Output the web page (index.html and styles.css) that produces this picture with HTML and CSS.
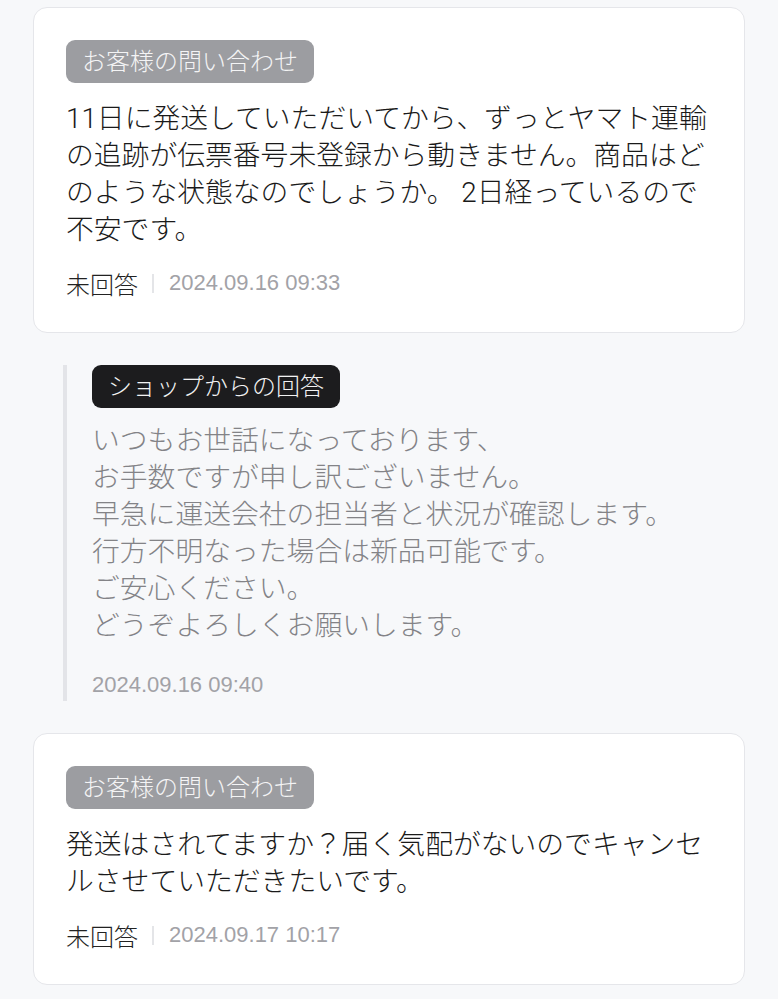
FILE: index.html
```html
<!DOCTYPE html>
<html lang="ja">
<head>
<meta charset="utf-8">
<title>問い合わせ</title>
<link rel="stylesheet" href="styles.css">
</head>
<body>
<main class="thread">
  <section class="card">
    <span class="tag tag-customer">お客様の問い合わせ</span>
    <p class="body">11日に発送していただいてから、ずっとヤマト運輸の追跡が伝票番号未登録から動きません。商品はどのような状態なのでしょうか。 2日経っているので不安です。</p>
    <div class="meta">
      <span class="status">未回答</span>
      <span class="sep"></span>
      <span class="date">2024.09.16 09:33</span>
    </div>
  </section>

  <section class="reply">
    <span class="tag tag-shop">ショップからの回答</span>
    <p class="reply-body">いつもお世話になっております、
お手数ですが申し訳ございません。
早急に運送会社の担当者と状況が確認します。
行方不明なった場合は新品可能です。
ご安心ください。
どうぞよろしくお願いします。</p>
    <div class="reply-date">2024.09.16 09:40</div>
  </section>

  <section class="card">
    <span class="tag tag-customer">お客様の問い合わせ</span>
    <p class="body">発送はされてますか？届く気配がないのでキャンセルさせていただきたいです。</p>
    <div class="meta">
      <span class="status">未回答</span>
      <span class="sep"></span>
      <span class="date">2024.09.17 10:17</span>
    </div>
  </section>
</main>
</body>
</html>
```
FILE: styles.css
```css
* { box-sizing: border-box; }

html, body {
  margin: 0;
  padding: 0;
  background: #f7f8fa;
}

body {
  font-family: "Liberation Sans", "Noto Sans CJK JP", sans-serif;
  color: #1e1e1e;
}

.thread {
  display: flex;
  flex-direction: column;
  gap: 32px;
  padding: 7px 33px 16px 33px;
}

.card {
  background: #ffffff;
  border: 1px solid #e5e6ea;
  border-radius: 14px;
  padding: 32px 32px 32px 32px;
  display: flex;
  flex-direction: column;
  align-items: flex-start;
}

.tag {
  display: inline-flex;
  align-items: center;
  height: 43px;
  padding: 0 16px;
  border-radius: 9px;
  font-family: "Roboto", "Noto Sans CJK JP", sans-serif;
  font-size: 24px;
  font-weight: 300;
  line-height: 1;
  white-space: nowrap;
}

.tag-customer {
  background: #9c9da1;
  color: #f4f4f5;
}

.tag-shop {
  background: #1c1c1e;
  color: #f2f2f2;
}

.body {
  margin: 17px 0 0 0;
  font-family: "Roboto", "Noto Sans CJK JP", sans-serif;
  font-size: 27.8px;
  font-weight: 300;
  line-height: 37px;
  color: #1a1a1a;
  width: 100%;
}

.meta {
  display: flex;
  align-items: center;
  margin-top: 18px;
  height: 34px;
}

.status {
  font-family: "Roboto", "Noto Sans CJK JP", sans-serif;
  font-size: 24px;
  font-weight: 300;
  color: #222222;
}

.sep {
  width: 2px;
  height: 19px;
  background: #e4e5e8;
  margin: 0 15px 0 14px;
}

.date {
  font-size: 22px;
  color: #a2a2a7;
}

.reply {
  margin-left: 30px;
  border-left: 4px solid #e3e4e8;
  padding-left: 25px;
  padding-bottom: 1px;
  display: flex;
  flex-direction: column;
  align-items: flex-start;
}

.reply-body {
  margin: 14px 0 0 0;
  font-family: "Roboto", "Noto Sans CJK JP", sans-serif;
  font-size: 27.8px;
  font-weight: 300;
  line-height: 37px;
  color: #838387;
  white-space: pre-line;
}

.reply-date {
  margin-top: 26px;
  height: 30px;
  line-height: 30px;
  font-size: 22px;
  color: #a2a2a7;
}
```
